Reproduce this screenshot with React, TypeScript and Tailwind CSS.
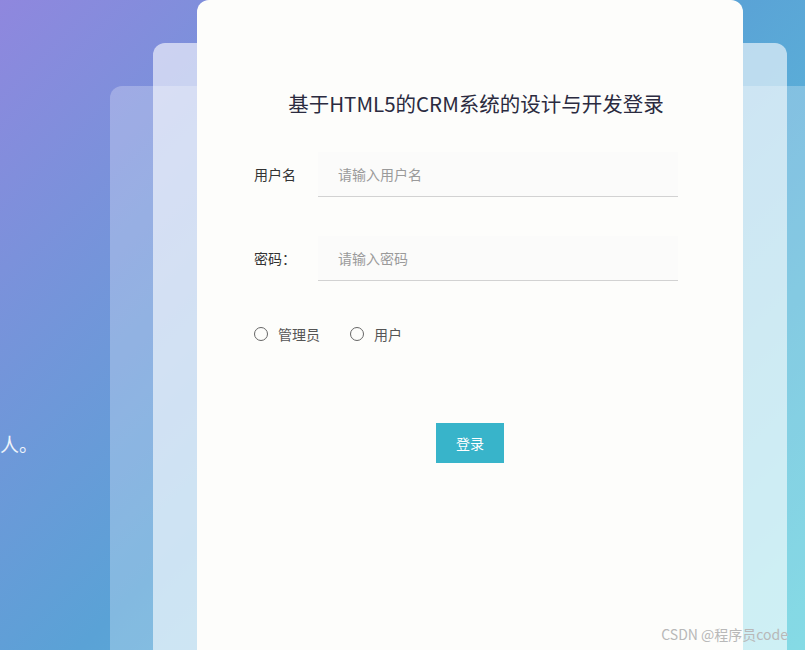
export default function App() {
  const font = { fontFamily: '"Noto Sans CJK SC", "Noto Sans", sans-serif' };
  return (
    <div
      className="relative w-[805px] h-[650px] overflow-hidden bg-[linear-gradient(135deg,#8f87de_0%,#5aa2d6_50%,#5ccfdc_100%)]"
      style={font}
    >
      <div className="absolute left-[110px] top-[86px] w-[720px] h-[700px] rounded-xl bg-white/25" />
      <div className="absolute left-[153px] top-[43px] w-[634px] h-[700px] rounded-xl bg-white/60" />
      <div className="absolute left-0 top-[432px] text-[19px] leading-[24px] text-[#eef4fb]">人。</div>

      <div className="relative ml-[197px] w-[546px] h-[670px] rounded-xl bg-[#fdfdfb] pt-[88px]">
        <h1 className="pl-[12px] text-center text-[20.5px] leading-[30px] text-[#2b2b40] font-normal">
          基于HTML5的CRM系统的设计与开发登录
        </h1>

        <div className="mt-[34px] flex items-center pl-[57px]">
          <label className="w-[64px] text-[14px] text-[#333]">用户名</label>
          <input
            className="w-[360px] h-[45px] border-b border-[#d2d2d2] bg-[#fbfbfa] pl-[20px] text-[14px] outline-none placeholder:text-[#9a9a9a]"
            placeholder="请输入用户名"
          />
        </div>

        <div className="mt-[39px] flex items-center pl-[57px]">
          <label className="w-[64px] text-[14px] text-[#333]">密码：</label>
          <input
            type="password"
            className="w-[360px] h-[45px] border-b border-[#d2d2d2] bg-[#fbfbfa] pl-[20px] text-[14px] outline-none placeholder:text-[#9a9a9a]"
            placeholder="请输入密码"
          />
        </div>

        <div className="mt-[43px] flex items-center pl-[57px] h-[20px] text-[14px] text-[#555]">
          <span className="w-[14px] h-[14px] rounded-full border border-[#666]" />
          <span className="ml-[10px]">管理员</span>
          <span className="ml-[30px] w-[14px] h-[14px] rounded-full border border-[#666]" />
          <span className="ml-[10px]">用户</span>
        </div>

        <div className="mt-[79px] flex justify-center">
          <button className="w-[68px] h-[40px] bg-[#38b4ca] text-white text-[14px]">登录</button>
        </div>
      </div>

      <div className="absolute right-[17px] top-[624px] text-[14px] leading-[20px] text-[#b8b8b8]">
        CSDN @程序员code
      </div>
    </div>
  );
}
